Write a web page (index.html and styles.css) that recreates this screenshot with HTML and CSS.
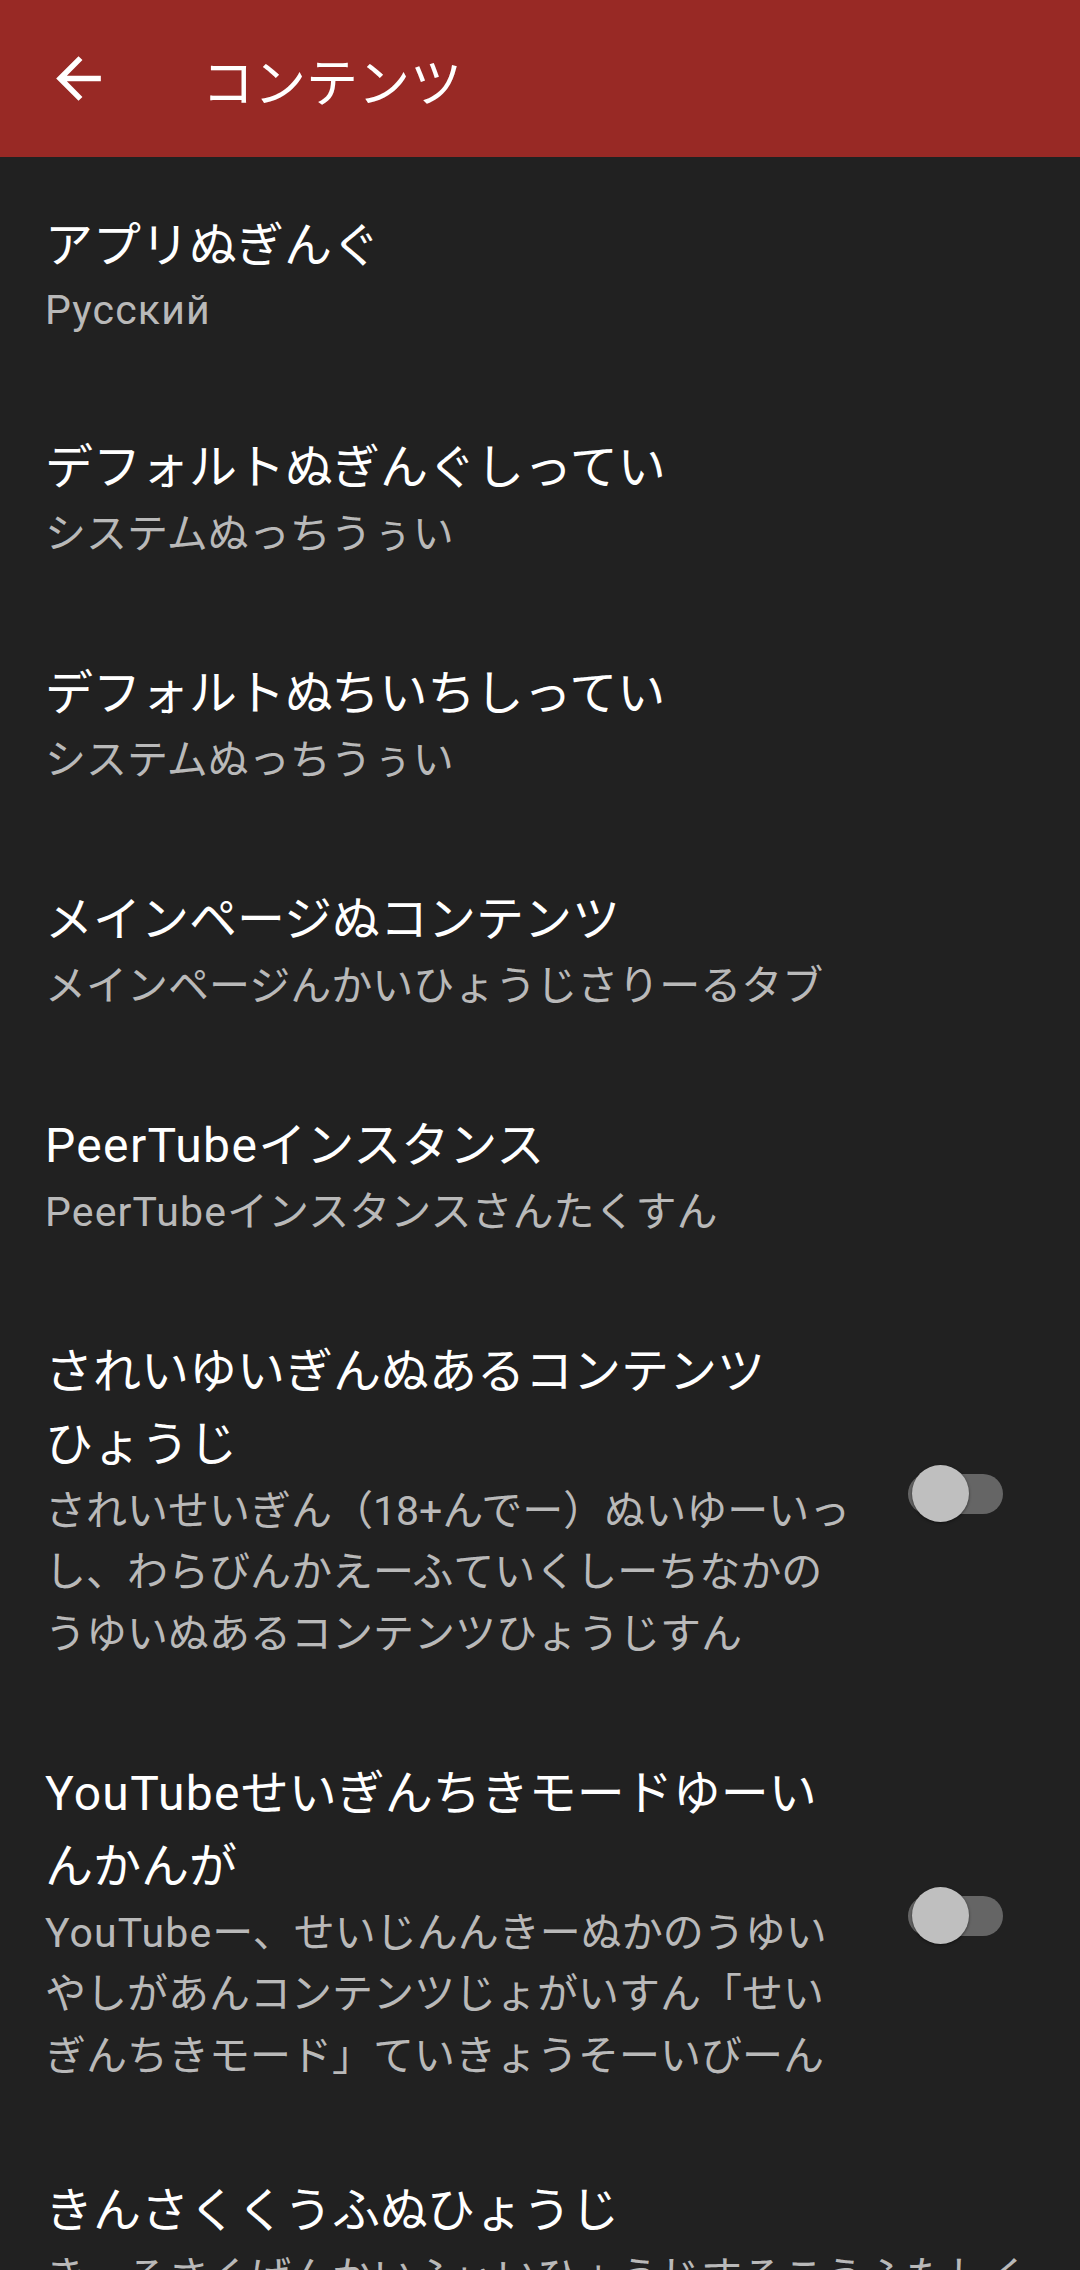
FILE: index.html
```html
<!DOCTYPE html>
<html lang="ja">
<head>
<meta charset="utf-8">
<title>コンテンツ</title>
<link rel="stylesheet" href="styles.css">
</head>
<body>
<header class="appbar">
  <button class="nav" aria-label="戻る">
    <svg viewBox="0 0 24 24" width="67" height="67"><path fill="#ffffff" d="M20 11H7.83l5.59-5.59L12 4l-8 8 8 8 1.41-1.41L7.83 13H20v-2z"/></svg>
  </button>
  <h1 class="title">コンテンツ</h1>
</header>
<main class="list">
  <div class="pref">
    <div class="text">
      <div class="ttl">アプリぬぎんぐ</div>
      <div class="sum latin"><span class="lat">Русский</span></div>
    </div>
  </div>
  <div class="pref">
    <div class="text">
      <div class="ttl">デフォルトぬぎんぐしってい</div>
      <div class="sum">システムぬっちうぅい</div>
    </div>
  </div>
  <div class="pref">
    <div class="text">
      <div class="ttl">デフォルトぬちいちしってい</div>
      <div class="sum">システムぬっちうぅい</div>
    </div>
  </div>
  <div class="pref">
    <div class="text">
      <div class="ttl">メインページぬコンテンツ</div>
      <div class="sum">メインページんかいひょうじさりーるタブ</div>
    </div>
  </div>
  <div class="pref">
    <div class="text">
      <div class="ttl"><span class="lat">PeerTube</span>インスタンス</div>
      <div class="sum"><span class="lat">PeerTube</span>インスタンスさんたくすん</div>
    </div>
  </div>
  <div class="pref">
    <div class="text">
      <div class="ttl">されいゆいぎんぬあるコンテンツひょうじ</div>
      <div class="sum">されいせいぎん（18+んでー）ぬいゆーいっし、わらびんかえーふていくしーちなかのうゆいぬあるコンテンツひょうじすん</div>
    </div>
    <div class="widget"><span class="switch"></span></div>
  </div>
  <div class="pref short">
    <div class="text">
      <div class="ttl"><span class="lat">YouTube</span>せいぎんちきモードゆーいんかんが</div>
      <div class="sum"><span class="lat">YouTube</span>ー、せいじんんきーぬかのうゆいやしがあんコンテンツじょがいすん「せいぎんちきモード」ていきょうそーいびーん</div>
    </div>
    <div class="widget"><span class="switch"></span></div>
  </div>
  <div class="pref">
    <div class="text">
      <div class="ttl">きんさくくうふぬひょうじ</div>
      <div class="sum">きーろさくげんかいふぃいひょうじするこうふたしくも</div>
    </div>
  </div>
</main>
</body>
</html>
```
FILE: styles.css
```css
html {
  background: #212121;
}
body {
  margin: 0;
  height: 2270px;
  overflow: hidden;
  background: #212121;
  font-family: Roboto, "Noto Sans CJK JP", sans-serif;
  color: #ffffff;
  line-break: strict;
}
.appbar {
  height: 157px;
  background: #982925;
  display: flex;
  align-items: center;
  padding-left: 45px;
  box-sizing: border-box;
}
.nav {
  width: 67px;
  height: 67px;
  padding: 0;
  border: 0;
  background: none;
  display: flex;
  flex: none;
}
.title {
  margin: 0 0 0 90px;
  padding-top: 12px;
  font-size: 52px;
  font-weight: 400;
  line-height: 60px;
  color: #ffffff;
}
.list {
  display: flex;
  flex-direction: column;
}
.pref {
  display: flex;
  align-items: center;
  padding: 52px 45px 39.5px;
}
.pref.short {
  padding-bottom: 34.5px;
}
.text {
  flex: 1;
  min-width: 0;
}
.ttl {
  font-size: 48px;
  line-height: 73px;
  color: #ffffff;
}
.sum {
  font-size: 41px;
  line-height: 61.5px;
  color: rgba(255, 255, 255, 0.7);
}
.sum.latin {
  line-height: 57px;
}
.lat {
  letter-spacing: 0.028em;
}
.widget {
  flex: none;
  width: 179px;
  display: flex;
  justify-content: flex-end;
  padding-right: 32px;
  box-sizing: border-box;
  margin-bottom: 12.5px;
}
.switch {
  position: relative;
  display: block;
  width: 95px;
  height: 40px;
  border-radius: 20px;
  background: #656565;
}
.switch::before {
  content: "";
  position: absolute;
  left: 4px;
  top: -8.5px;
  width: 57px;
  height: 57px;
  border-radius: 50%;
  background: #bfbfbf;
  box-shadow: 0 1px 3px rgba(0, 0, 0, 0.5);
}
```
